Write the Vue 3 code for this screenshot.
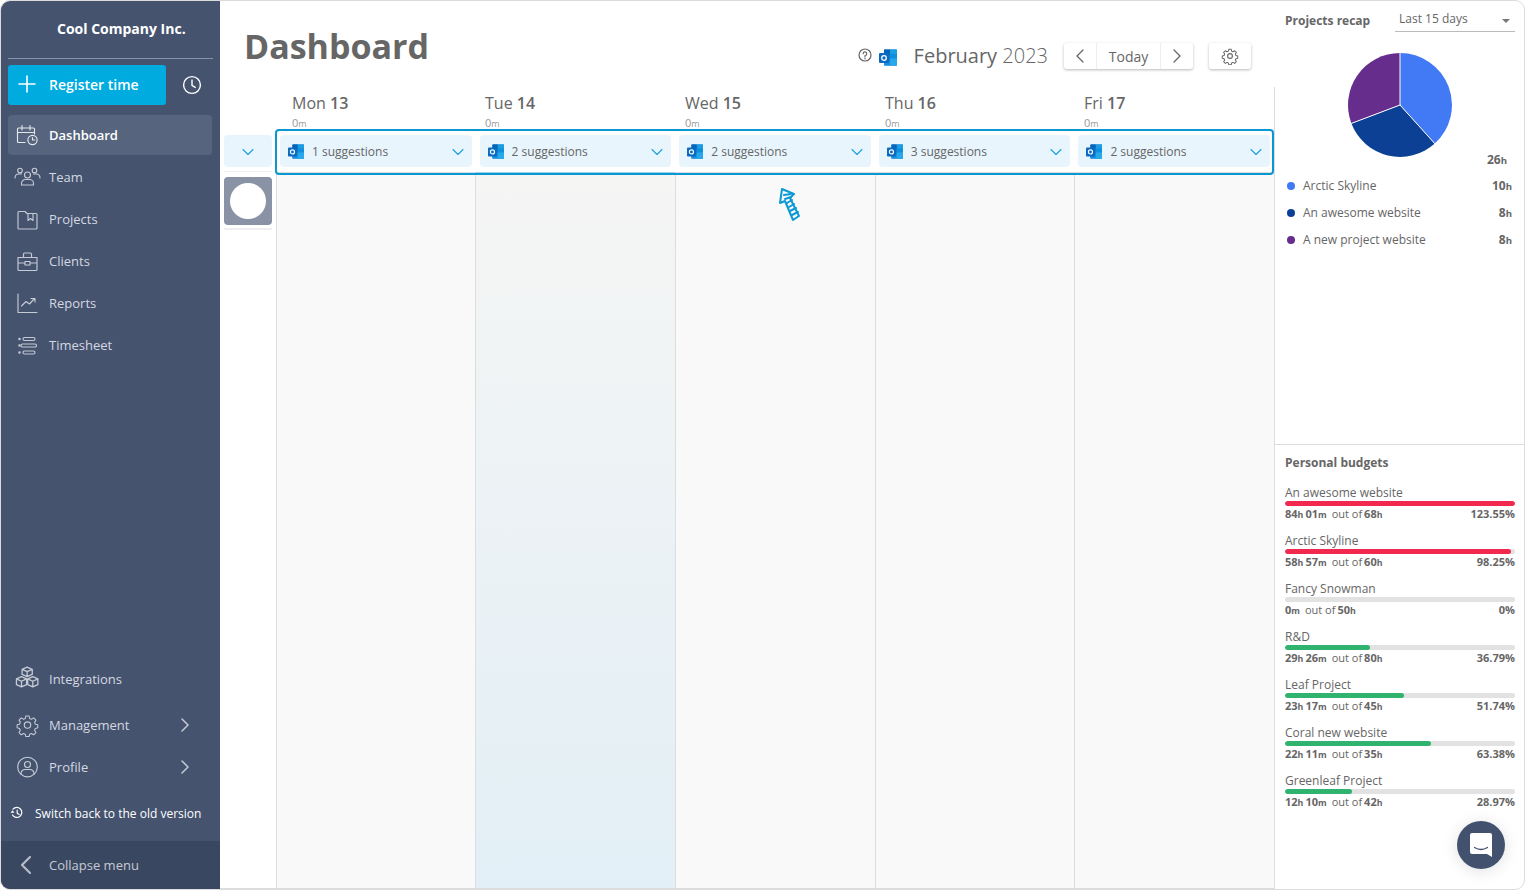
<script setup>
const topNav = [
  { label: 'Dashboard', icon: 'dash', active: true },
  { label: 'Team', icon: 'team' },
  { label: 'Projects', icon: 'projects' },
  { label: 'Clients', icon: 'clients' },
  { label: 'Reports', icon: 'reports' },
  { label: 'Timesheet', icon: 'timesheet' },
];

const days = [
  { name: 'Mon', num: 13, count: 1 },
  { name: 'Tue', num: 14, count: 2, today: true },
  { name: 'Wed', num: 15, count: 2 },
  { name: 'Thu', num: 16, count: 3 },
  { name: 'Fri', num: 17, count: 2 },
];

const recap = [
  { name: 'Arctic Skyline', hours: 10, color: '#4279f4' },
  { name: 'An awesome website', hours: 8, color: '#0c4094' },
  { name: 'A new project website', hours: 8, color: '#662d8c' },
];

const budgets = [
  { name: 'An awesome website', spent: [['84', 'h'], ['01', 'm']], total: 68, pct: '123.55%', width: 100, color: '#f1294f' },
  { name: 'Arctic Skyline', spent: [['58', 'h'], ['57', 'm']], total: 60, pct: '98.25%', width: 98.25, color: '#f1294f' },
  { name: 'Fancy Snowman', spent: [['0', 'm']], total: 50, pct: '0%', width: 0, color: '#2fb36f' },
  { name: 'R&D', spent: [['29', 'h'], ['26', 'm']], total: 80, pct: '36.79%', width: 36.79, color: '#2fb36f' },
  { name: 'Leaf Project', spent: [['23', 'h'], ['17', 'm']], total: 45, pct: '51.74%', width: 51.74, color: '#2fb36f' },
  { name: 'Coral new website', spent: [['22', 'h'], ['11', 'm']], total: 35, pct: '63.38%', width: 63.38, color: '#2fb36f' },
  { name: 'Greenleaf Project', spent: [['12', 'h'], ['10', 'm']], total: 42, pct: '28.97%', width: 28.97, color: '#2fb36f' },
];
</script>

<template>
  <div class="app">
    <aside class="sidebar">
      <div class="company">Cool Company Inc.</div>
      <div class="register-row">
        <button class="register">
          <svg width="20" height="20" viewBox="0 0 20 20" class="plus"><path d="M10 2v16M2 10h16" /></svg>
          Register time
        </button>
        <svg class="clock" width="20" height="20" viewBox="0 0 20 20"><circle cx="10" cy="10" r="8.4" /><path d="M10 5v5.4l3.2 2" /></svg>
      </div>

      <nav class="nav">
        <a v-for="item in topNav" :key="item.label" class="nav-item" :class="{ active: item.active }">
          <svg class="nav-icon" width="24" height="24" viewBox="0 0 24 24">
            <template v-if="item.icon === 'dash'">
              <path d="M10 19.5H3.5a1 1 0 0 1-1-1V6a1 1 0 0 1 1-1h15a1 1 0 0 1 1 1v5M2.5 9.5h17M7 2.5V7M15 2.5V7" />
              <circle cx="17.5" cy="17" r="4.6" />
              <path d="M17.5 14.5V17h2.2" />
            </template>
            <template v-else-if="item.icon === 'team'">
              <circle cx="12.5" cy="10" r="3" /><circle cx="5" cy="5.5" r="2.3" /><circle cx="19.5" cy="5.5" r="2.3" />
              <path d="M6.5 20v-1.500a4 4 0 0 1 4-4h4a4 4 0 0 1 4 4V20ZM0 13c0-2.500 1.500-4 4-4h2.500M25 13c0-2.500-1.500-4-4-4h-2.500" />
            </template>
            <template v-else-if="item.icon === 'projects'">
              <path d="M3 5.500a1 1 0 0 1 1-1h6l2 2h9a1 1 0 0 1 1 1V21a1 1 0 0 1-1 1H4a1 1 0 0 1-1-1ZM13 6.500v7l2.500-2 2.500 2v-7" />
            </template>
            <template v-else-if="item.icon === 'clients'">
              <path d="M3 8.500h19v12a1 1 0 0 1-1 1H4a1 1 0 0 1-1-1ZM8.500 8.500V5a1 1 0 0 1 1-1h6a1 1 0 0 1 1 1v3.500M3 14h7M15 14h7M10 12.500h5v3.500h-5Z" />
            </template>
            <template v-else-if="item.icon === 'reports'">
              <path d="M3 3v18.500h19M6.500 15l4.500-4.500 3.500 2.500 5-5.500M16 7.500h4v3.500" />
            </template>
            <template v-else>
              <path d="M9.500 4.500h9a1.500 1.500 0 0 1 0 3h-9a1.500 1.500 0 0 1 0-3ZM7.500 11h12.500a1.500 1.500 0 0 1 0 3H7.500a1.500 1.500 0 0 1 0-3ZM9.500 18h9a1.500 1.500 0 0 1 0 3h-9a1.500 1.500 0 0 1 0-3Z" />
              <circle cx="4.500" cy="6" r="0.700" /><circle cx="4.500" cy="12.500" r="0.700" /><circle cx="4.500" cy="19.500" r="0.700" />
            </template>
          </svg>
          <span>{{ item.label }}</span>
        </a>
      </nav>

      <div class="bottom-nav">
        <a class="nav-item low">
          <svg class="nav-icon" width="24" height="24" viewBox="0 0 24 24">
            <path transform="translate(-1.400 -1.600) scale(1.130)" d="M12 1.500l4.500 2v4.500l-4.500 2-4.500-2V3.500ZM7.500 3.500l4.500 2 4.500-2M12 5.500V10M7 10l4.500 2v5L7 19l-4.500-2v-5ZM2.500 12L7 14l4.500-2M7 14v5M17 10l4.500 2v5L17 19l-4.500-2v-5ZM12.500 12l4.500 2 4.500-2M17 14v5" />
          </svg>
          <span>Integrations</span>
        </a>
        <a class="nav-item low gap">
          <svg class="nav-icon" width="24" height="24" viewBox="0 0 24 24">
            <circle cx="12.500" cy="12" r="3.200" />
            <path d="M10.700 2h3.600l.6 2.800 2 .9 2.500-1.500 2.500 2.500-1.500 2.500.9 2 2.700.7v3.400l-2.700.7-.9 2 1.500 2.500-2.500 2.500-2.500-1.500-2 .9-.6 2.600h-3.600l-.6-2.600-2-.9-2.500 1.500-2.500-2.500 1.500-2.500-.9-2-2.700-.7v-3.400l2.700-.7.9-2-1.500-2.500 2.500-2.500 2.500 1.500 2-.9Z" transform="translate(1.200 1.100) scale(.9)" />
          </svg>
          <span>Management</span>
          <svg class="caret" width="10" height="14" viewBox="0 0 10 14"><path d="M2 1l6 6-6 6" /></svg>
        </a>
        <a class="nav-item low">
          <svg class="nav-icon" width="24" height="24" viewBox="0 0 24 24">
            <circle cx="12.500" cy="12" r="9.800" /><circle cx="12.500" cy="9.500" r="3" />
            <path d="M6 19c0-3 2-4.500 4.500-4.500h4c2.500 0 4.500 1.500 4.500 4.500" />
          </svg>
          <span>Profile</span>
          <svg class="caret" width="10" height="14" viewBox="0 0 10 14"><path d="M2 1l6 6-6 6" /></svg>
        </a>
        <a class="switch">
          <svg width="14" height="14" viewBox="0 0 14 14"><path d="M3 3.200A5 5 0 1 1 2.500 9M7.200 4.200v3l2 1.200" /><path class="fill" d="M0.500 6.800h4L2.500 4.200Z" /></svg>
          <span>Switch back to the old version</span>
        </a>
      </div>

      <div class="collapse">
        <svg width="14" height="20" viewBox="0 0 14 20"><path d="M11 2L3 10l8 8" /></svg>
        <span>Collapse menu</span>
      </div>
    </aside>

    <main class="main">
      <header class="head">
        <h1>Dashboard</h1>
        <div class="controls">
          <svg class="help" width="14" height="14" viewBox="0 0 14 14">
            <circle cx="7" cy="7" r="6" />
            <path d="M5.200 5.600A1.800 1.800 0 1 1 7 7.500v.9M7 9.800v1" />
          </svg>
          <svg class="outlook top" width="18" height="17" viewBox="0 0 18 16">
            <rect x="5" y="0" width="13" height="16" rx="1" fill="#0f78d4" />
            <rect x="5" y="0" width="6" height="5" fill="#0364b8" />
            <rect x="11" y="0" width="7" height="5" fill="#1b9de2" />
            <rect x="11" y="5" width="7" height="6" fill="#0f8fdc" />
            <rect x="5" y="11" width="13" height="5" fill="#1490df" />
            <rect x="11" y="9" width="7" height="7" fill="#28a8ea" />
            <rect x="0" y="3.500" width="10" height="10" rx="1" fill="#0a6bc0" />
            <circle cx="5" cy="8.500" r="2.300" fill="none" stroke="#fff" stroke-width="1.300" />
          </svg>
          <div class="month">February <span>2023</span></div>
          <div class="pager">
            <button><svg width="10" height="14" viewBox="0 0 10 14"><path d="M8 1L2 7l6 6" /></svg></button>
            <button class="today">Today</button>
            <button><svg width="10" height="14" viewBox="0 0 10 14"><path d="M2 1l6 6-6 6" /></svg></button>
          </div>
          <button class="settings">
            <svg width="18" height="18" viewBox="0 0 24 24">
              <circle cx="12" cy="12" r="3.200" />
              <path d="M10.200 2h3.600l.6 2.800 2 .9 2.500-1.500 2.500 2.500-1.500 2.500.9 2 2.700.7v3.400l-2.700.7-.9 2 1.500 2.500-2.500 2.500-2.500-1.500-2 .9-.6 2.600h-3.600l-.6-2.600-2-.9-2.500 1.500-2.500-2.500 1.500-2.500-.9-2-2.700-.7v-3.400l2.700-.7.9-2-1.500-2.500 2.500-2.500 2.500 1.500 2-.9Z" transform="translate(1.200 1.200) scale(.9)" />
            </svg>
          </button>
        </div>
      </header>

      <section class="calendar">
        <div class="day-heads">
          <div v-for="d in days" :key="d.name" class="day-head">
            <div class="day-title">{{ d.name }} <b>{{ d.num }}</b></div>
            <div class="day-time">0<small>m</small></div>
          </div>
        </div>

        <div class="suggest-row">
          <button class="toggle">
            <svg width="12" height="8" viewBox="0 0 12 8"><path d="M1 1.500l5 5 5-5" /></svg>
          </button>
          <div class="suggest-box">
            <div v-for="d in days" :key="d.name" class="suggest">
              <svg class="outlook" width="16" height="15" viewBox="0 0 18 16">
                <rect x="5" y="0" width="13" height="16" rx="1" fill="#0f78d4" />
                <rect x="5" y="0" width="6" height="5" fill="#0364b8" />
                <rect x="11" y="0" width="7" height="5" fill="#1b9de2" />
                <rect x="11" y="5" width="7" height="6" fill="#0f8fdc" />
                <rect x="5" y="11" width="13" height="5" fill="#1490df" />
                <rect x="11" y="9" width="7" height="7" fill="#28a8ea" />
                <rect x="0" y="3.500" width="10" height="10" rx="1" fill="#0a6bc0" />
                <circle cx="5" cy="8.500" r="2.300" fill="none" stroke="#fff" stroke-width="1.300" />
              </svg>
              <span>{{ d.count }} suggestions</span>
              <svg class="chev" width="12" height="8" viewBox="0 0 12 8"><path d="M1 1.500l5 5 5-5" /></svg>
            </div>
          </div>
        </div>

        <div class="grid">
          <div class="people">
            <div class="person"><div class="avatar"></div></div>
          </div>
          <div v-for="d in days" :key="d.name" class="col" :class="{ today: d.today }"></div>
        </div>
      </section>

      <svg class="cursor" width="24" height="36" viewBox="0 0 24 36">
        <path d="M4 2l12 5-4 4 9 18-6 4-8-19-5 2Z" />
        <path d="M6 8l7-1M7 12l6-2M9 16l5-3M11 20l5-3M12 24l6-3M14 28l6-3" />
      </svg>
    </main>

    <aside class="panel">
      <section class="recap">
        <div class="recap-head">
          <h2>Projects recap</h2>
          <div class="select">Last 15 days<i></i></div>
        </div>
        <svg class="pie" width="106" height="106" viewBox="0 0 106 106">
          <path d="M53 53V1A52 52 0 0 1 87.800 91.600Z" fill="#4279f4" />
          <path d="M53 53L87.800 91.600A52 52 0 0 1 4.400 71.400Z" fill="#0c4094" />
          <path d="M53 53L4.400 71.400A52 52 0 0 1 53 1Z" fill="#662d8c" />
          <path d="M53 1V53L87.800 91.600M53 53L4.400 71.400" fill="none" stroke="#fff" stroke-width="1" />
        </svg>
        <div class="recap-total">26<small>h</small></div>
        <ul class="legend">
          <li v-for="r in recap" :key="r.name">
            <i :style="{ background: r.color }"></i>
            <span>{{ r.name }}</span>
            <b>{{ r.hours }}<small>h</small></b>
          </li>
        </ul>
      </section>

      <section class="budgets">
        <h2>Personal budgets</h2>
        <div v-for="b in budgets" :key="b.name" class="budget">
          <div class="budget-name">{{ b.name }}</div>
          <div class="bar"><div class="fill" :style="{ width: b.width + '%', background: b.color }"></div></div>
          <div class="budget-info">
            <span>
              <b v-for="s in b.spent" :key="s[1]" class="spent">{{ s[0] }}<small>{{ s[1] }}</small></b>
              <span class="out">out of</span>
              <b>{{ b.total }}<small>h</small></b>
            </span>
            <b>{{ b.pct }}</b>
          </div>
        </div>
      </section>
    </aside>

    <button class="chat">
      <svg width="24" height="26" viewBox="0 0 24 26">
        <path d="M3 1h18a2 2 0 0 1 2 2v22l-5-3H3a2 2 0 0 1-2-2V3a2 2 0 0 1 2-2Z" fill="#fff" />
        <path d="M5.500 15.500c4 2.500 9 2.500 13 0" fill="none" stroke="#42526e" stroke-width="1.300" stroke-linecap="round" />
      </svg>
    </button>
  </div>
</template>

<style scoped>
* {
  box-sizing: border-box;
}

svg {
  fill: none;
  stroke-linecap: round;
  stroke-linejoin: round;
}

button {
  font-family: inherit;
  border: 0;
  background: none;
  padding: 0;
}

h1,
h2,
ul {
  margin: 0;
  padding: 0;
}

.app {
  position: relative;
  display: flex;
  width: 1525px;
  height: 890px;
  overflow: hidden;
  background: #fff;
  border: 1px solid #dcdcdc;
  border-radius: 10px;
  font-family: "Open Sans", sans-serif;
  color: #666;
}

/* sidebar */
.sidebar {
  display: flex;
  flex-direction: column;
  flex: 0 0 219px;
  background: #45536f;
  color: #d4d8e0;
  font-size: 13px;
}

.company {
  height: 58px;
  margin: 0 7px;
  padding: 18px 0 0 49px;
  border-bottom: 1px solid #8a93a5;
  color: #fff;
  font-size: 14px;
  font-weight: 700;
  line-height: 20px;
}

.register-row {
  display: flex;
  align-items: center;
  padding: 6px 0 0 7px;
}

.register {
  display: flex;
  align-items: center;
  gap: 12px;
  width: 158px;
  height: 40px;
  padding: 0 0 2px 9px;
  border-radius: 3px;
  background: #00abe0;
  color: #fff;
  font-size: 14px;
  font-weight: 600;
}

.plus path {
  stroke: #fff;
  stroke-width: 1.600;
}

.clock {
  margin-left: 16px;
  stroke: #fff;
  stroke-width: 1.400;
}

.nav {
  display: flex;
  flex-direction: column;
  gap: 2px;
  padding: 10px 8px 0 7px;
}

.nav-item {
  display: flex;
  align-items: center;
  height: 40px;
  padding-left: 7px;
  border-radius: 4px;
  line-height: 40px;
}

.nav-item span {
  margin-left: 10px;
}

.nav-icon {
  flex: none;
  stroke: #c5cad4;
  stroke-width: 1.150;
  overflow: visible;
}

.nav-item.active {
  background: #56647e;
  color: #fff;
  font-weight: 600;
}

.nav-item.active .nav-icon {
  stroke: #e4e7ec;
}

.bottom-nav {
  margin-top: auto;
  padding: 0 8px 0 7px;
}

.low {
  height: 42px;
}

.low.gap {
  margin-top: 4px;
}

.caret {
  margin-left: auto;
  margin-right: 22px;
  stroke: #c5cad4;
  stroke-width: 1.500;
}

.switch {
  display: flex;
  align-items: center;
  gap: 11px;
  height: 48px;
  margin: 1px 0 0 2px;
  color: #fff;
  font-size: 12px;
}

.switch svg {
  stroke: #fff;
  stroke-width: 1.200;
}

.switch .fill {
  fill: #fff;
  stroke: none;
}

.collapse {
  display: flex;
  align-items: center;
  gap: 16px;
  height: 48px;
  margin-top: 4px;
  padding-left: 18px;
  background: #3a4761;
  color: #c5cad4;
}

.collapse svg {
  stroke: #b6bcc8;
  stroke-width: 2.200;
}

/* main */
.main {
  position: relative;
  display: flex;
  flex-direction: column;
  flex: 0 0 1055px;
  min-width: 0;
}

.head {
  display: flex;
  justify-content: space-between;
  height: 86px;
}

h1 {
  padding: 21px 0 0 24px;
  color: #666;
  font-size: 34px;
  font-weight: 700;
  line-height: 48px;
}

.controls {
  display: flex;
  align-items: center;
  align-self: flex-start;
  margin: 42px 24px 0 0;
  height: 26px;
}

.help {
  margin-top: -3px;
  stroke: #666;
  stroke-width: 1.200;
}

.outlook {
  flex: none;
}

.outlook.top {
  margin-left: 7px;
  margin-top: 3px;
}

.month {
  margin-left: 17px;
  color: #666;
  font-size: 20px;
  line-height: 26px;
}

.month span {
  font-weight: 300;
}

.pager,
.settings {
  height: 26px;
  border-radius: 3px;
  background: #fff;
  box-shadow: 0 1px 3px rgba(0, 0, 0, 0.28);
}

.pager {
  display: flex;
  margin-left: 16px;
}

.pager button {
  display: flex;
  align-items: center;
  justify-content: center;
  width: 32px;
  height: 26px;
}

.pager svg {
  stroke: #666;
  stroke-width: 1.300;
}

.pager .today {
  width: 65px;
  border-left: 1px solid #eee;
  border-right: 1px solid #eee;
  color: #666;
  font-size: 14px;
}

.settings {
  display: flex;
  align-items: center;
  justify-content: center;
  width: 42px;
  margin-left: 16px;
}

.settings svg {
  stroke: #666;
  stroke-width: 1.500;
}

.calendar {
  display: flex;
  flex-direction: column;
  flex: 1;
  min-height: 0;
  border-right: 1px solid #ddd;
}

.day-heads {
  display: grid;
  grid-template-columns: 199px 200px 200px 199px 1fr;
  height: 42px;
  margin-left: 56px;
}

.day-head {
  padding-left: 10px;
}

.day-head:first-child {
  padding-left: 16px;
}

.day-title {
  padding-top: 5px;
  color: #666;
  font-size: 16px;
  line-height: 22px;
}

.day-title b {
  font-weight: 600;
}

.day-time {
  margin-top: 2px;
  color: #999;
  font-size: 11px;
  line-height: 14px;
}

.day-time small {
  font-size: 9px;
}

.suggest-row {
  display: flex;
  height: 46px;
}

.toggle {
  display: flex;
  align-items: center;
  justify-content: center;
  width: 48px;
  height: 32px;
  margin: 6px 3px 0 4px;
  border-radius: 4px;
  background: #e8f5fd;
}

.toggle svg,
.chev {
  margin-top: 1px;
  stroke: #1ba2dc;
  stroke-width: 1.100;
}

.suggest-box {
  position: relative;
  z-index: 1;
  display: grid;
  flex: 1;
  grid-template-columns: repeat(5, 1fr);
  gap: 8px;
  padding: 4px 2px 6px 3px;
  border: 2px solid #0a98d2;
  border-radius: 4px;
}

.suggest {
  display: flex;
  align-items: center;
  height: 32px;
  padding: 0 8px;
  border-radius: 4px;
  background: #e8f5fd;
  color: #666;
  font-size: 12px;
}

.suggest span {
  margin-left: 8px;
}

.chev {
  margin-left: auto;
}

.grid {
  display: grid;
  flex: 1;
  grid-template-columns: 56px 199px 200px 200px 199px 1fr;
  min-height: 0;
  margin-top: -3px;
  border-bottom: 1px solid #ddd;
}

.people {
  padding: 0 4px;
}

.person {
  margin-top: -1px;
  padding: 5px 0 3px;
  border-top: 1px solid #eee;
  border-bottom: 2px solid #eee;
}

.avatar {
  position: relative;
  height: 48px;
  border-radius: 4px;
  background: #8a93a5;
}

.avatar::after {
  content: "";
  position: absolute;
  top: 6px;
  left: 6px;
  width: 36px;
  height: 36px;
  border-radius: 50%;
  background: #fff;
}

.col {
  border-top: 1px solid #ddd;
  border-left: 1px solid #ddd;
  background: #f9f9f9;
}

.col.today {
  border-top-color: #9fd0ea;
  background: linear-gradient(#f5f5f4, #e2eff6);
}

.cursor {
  position: absolute;
  top: 186px;
  left: 558px;
  stroke: #0c9ad6;
  stroke-width: 2;
}

/* right panel */
.panel {
  display: flex;
  flex-direction: column;
  flex: 1;
  min-width: 0;
}

.recap {
  position: relative;
  height: 444px;
  padding: 0 9px 0 10px;
  border-bottom: 1px solid #ddd;
}

.recap-head {
  display: flex;
  align-items: flex-start;
  justify-content: space-between;
}

h2 {
  color: #666;
  font-size: 12px;
  font-weight: 700;
  line-height: 16px;
}

.recap-head h2 {
  padding-top: 12px;
}

.select {
  position: relative;
  width: 120px;
  height: 31px;
  padding: 10px 0 0 4px;
  border-bottom: 1px solid #bbb;
  color: #666;
  font-size: 12px;
  line-height: 16px;
}

.select i {
  position: absolute;
  top: 18px;
  right: 5px;
  border: 4px solid transparent;
  border-top-color: #777;
  border-bottom: 0;
}

.pie {
  display: block;
  margin: 20px 0 0 62px;
}

.recap-total {
  position: absolute;
  top: 151px;
  right: 17px;
  color: #666;
  font-size: 12px;
  font-weight: 700;
  line-height: 16px;
}

small {
  font-size: 0.8em;
}

.legend {
  margin-top: 14px;
  list-style: none;
  font-size: 12px;
}

.legend li {
  display: flex;
  align-items: center;
  height: 27px;
  padding: 0 3px 0 2px;
}

.legend i {
  width: 8px;
  height: 8px;
  margin-right: 8px;
  border-radius: 50%;
}

.legend b {
  margin-left: auto;
}

.budgets {
  flex: 1;
  padding: 10px 9px 10px 10px;
}

.budgets h2 {
  margin-bottom: 14px;
}

.budget {
  height: 48px;
}

.budget-name {
  color: #666;
  font-size: 12px;
  line-height: 16px;
}

.bar {
  height: 5px;
  border-radius: 3px;
  background: #e2e2e2;
  overflow: hidden;
}

.fill {
  height: 100%;
  border-radius: 3px;
}

.budget-info {
  display: flex;
  justify-content: space-between;
  color: #666;
  font-size: 11px;
  line-height: 16px;
}

.spent {
  margin-right: 2px;
}

.out {
  margin: 0 2px 0 3px;
}

/* chat bubble */
.chat {
  position: absolute;
  top: 820px;
  right: 19px;
  display: flex;
  align-items: center;
  justify-content: center;
  width: 48px;
  height: 48px;
  border-radius: 50%;
  background: #42526e;
  box-shadow: 0 2px 16px rgba(0, 0, 0, 0.12);
}
</style>
